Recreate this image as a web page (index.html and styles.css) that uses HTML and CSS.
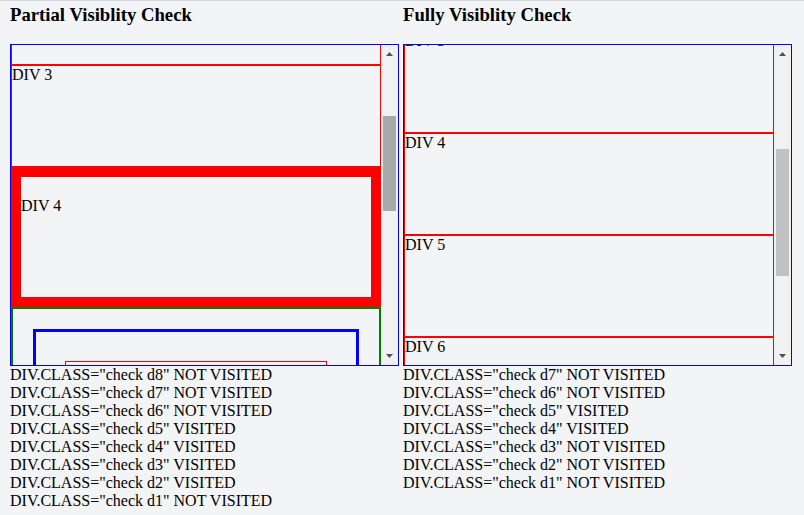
FILE: index.html
```html
<!DOCTYPE html>
<html>
<head>
<meta charset="utf-8">
<title>Visibility Check</title>
<link rel="stylesheet" href="styles.css">
</head>
<body>
<div class="page">
  <div class="col">
    <h3>Partial Visiblity Check</h3>
    <div class="box">
      <div class="viewport">
        <div class="scroll scroll-left">
          <div class="check d1"></div>
          <div class="check d2"></div>
          <div class="check d3">DIV 3</div>
          <div class="check thick d4">DIV 4</div>
          <div class="check green d5">
            <div class="inner-blue">
              <div class="inner-red"></div>
            </div>
          </div>
        </div>
      </div>
      <div class="sb">
        <div class="btn"><svg width="7" height="4" viewBox="0 0 7 4"><polygon points="0,4 7,4 3.5,0" fill="#505050"/></svg></div>
        <div class="track"><div class="thumb thumb-left"></div></div>
        <div class="btn btn-down"><svg width="7" height="4" viewBox="0 0 7 4"><polygon points="0,0 7,0 3.5,4" fill="#505050"/></svg></div>
      </div>
    </div>
    <div class="log">
      <div>DIV.CLASS="check d8" NOT VISITED</div>
      <div>DIV.CLASS="check d7" NOT VISITED</div>
      <div>DIV.CLASS="check d6" NOT VISITED</div>
      <div>DIV.CLASS="check d5" VISITED</div>
      <div>DIV.CLASS="check d4" VISITED</div>
      <div>DIV.CLASS="check d3" VISITED</div>
      <div>DIV.CLASS="check d2" VISITED</div>
      <div>DIV.CLASS="check d1" NOT VISITED</div>
    </div>
  </div>
  <div class="col">
    <h3>Fully Visiblity Check</h3>
    <div class="box">
      <div class="viewport">
        <div class="scroll scroll-right">
          <div class="check d1"></div>
          <div class="check d2"></div>
          <div class="check d3">DIV 3</div>
          <div class="check d4">DIV 4</div>
          <div class="check d5">DIV 5</div>
          <div class="check d6">DIV 6</div>
          <div class="check d7"></div>
        </div>
      </div>
      <div class="sb">
        <div class="btn"><svg width="7" height="4" viewBox="0 0 7 4"><polygon points="0,4 7,4 3.5,0" fill="#505050"/></svg></div>
        <div class="track"><div class="thumb thumb-right"></div></div>
        <div class="btn btn-down"><svg width="7" height="4" viewBox="0 0 7 4"><polygon points="0,0 7,0 3.5,4" fill="#505050"/></svg></div>
      </div>
    </div>
    <div class="log">
      <div>DIV.CLASS="check d7" NOT VISITED</div>
      <div>DIV.CLASS="check d6" NOT VISITED</div>
      <div>DIV.CLASS="check d5" VISITED</div>
      <div>DIV.CLASS="check d4" VISITED</div>
      <div>DIV.CLASS="check d3" NOT VISITED</div>
      <div>DIV.CLASS="check d2" NOT VISITED</div>
      <div>DIV.CLASS="check d1" NOT VISITED</div>
    </div>
  </div>
</div>
</body>
</html>
```
FILE: styles.css
```css
html, body {
  margin: 0;
  padding: 0;
}
body {
  background: #f3f4f6;
  border-top: 1px solid #d4d8dc;
  font-family: "Liberation Serif", "Times New Roman", serif;
  font-size: 16px;
  color: #000;
}
.page {
  display: flex;
  gap: 4px;
  padding: 3px 0 0 10px;
}
.col {
  width: 389px;
}
h3 {
  margin: 0 0 19px;
  font-size: 18.72px;
  line-height: 21px;
  font-weight: bold;
}
.box {
  display: flex;
  height: 320px;
  border: 1px solid #0000ff;
}
.viewport {
  flex: 1;
  overflow: hidden;
}
.scroll-left {
  margin-top: -184px;
}
.scroll-right {
  margin-top: -218px;
}
.check {
  height: 100px;
  border: 1px solid #ff0000;
  line-height: 18px;
}
.thick {
  border-width: 10px;
  padding-top: 20px;
}
.green {
  height: auto;
  border: 2px solid #008000;
  padding: 20px;
}
.inner-blue {
  border: 3px solid #0000ff;
  padding: 29px;
}
.inner-red {
  border: 1px solid #ff0000;
  height: 100px;
}
.sb {
  width: 17px;
  background: #f1f1f1;
  display: flex;
  flex-direction: column;
}
.btn {
  height: 17px;
  display: flex;
  align-items: center;
  justify-content: center;
}
.btn svg {
  display: block;
}
.btn-down {
  padding-bottom: 2px;
  height: 15px;
}
.track {
  flex: 1;
}
.thumb {
  margin: 0 2px;
}
.thumb-left {
  margin-top: 54px;
  height: 95px;
  background: #a8a8a8;
}
.thumb-right {
  margin-top: 87px;
  height: 127px;
  background: #c1c1c1;
}
.log {
  line-height: 18px;
  font-size: 16px;
}
```
